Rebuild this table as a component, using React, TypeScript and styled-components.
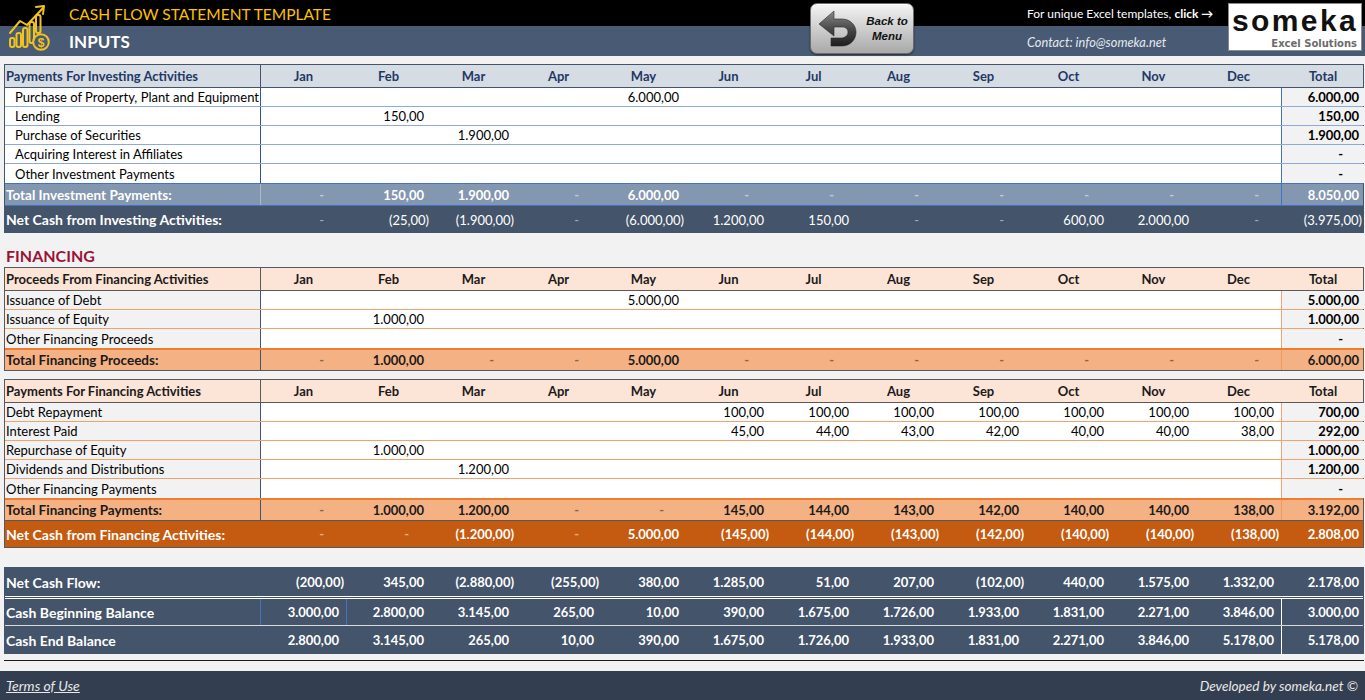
import React from 'react';
import styled, { createGlobalStyle } from 'styled-components';

const MONTHS = ['Jan', 'Feb', 'Mar', 'Apr', 'May', 'Jun', 'Jul', 'Aug', 'Sep', 'Oct', 'Nov', 'Dec'];
const COLS = '256px repeat(12, 85px) 84px';

type Tone = 'inv' | 'fin';

const TONES = {
  inv: {
    head: '#d6dce4',
    headText: '#1f3864',
    line: '#8ea9db',
    sep: '#2f5597',
    totalSep: '#4472c4',
    labelBg: '#ffffff',
    indent: 10,
    outline: '#44546a',
  },
  fin: {
    head: '#fce4d6',
    headText: '#1a1a1a',
    line: '#f1a26e',
    sep: '#44546a',
    totalSep: '#f1a26e',
    labelBg: '#f2f2f2',
    indent: 1,
    outline: '#595959',
  },
};

interface LineItem {
  label: string;
  values: Record<number, string>;
  total: string;
}

const investing: LineItem[] = [
  { label: 'Purchase of Property, Plant and Equipment', values: { 4: '6.000,00' }, total: '6.000,00' },
  { label: 'Lending', values: { 1: '150,00' }, total: '150,00' },
  { label: 'Purchase of Securities', values: { 2: '1.900,00' }, total: '1.900,00' },
  { label: 'Acquiring Interest in Affiliates', values: {}, total: '-' },
  { label: 'Other Investment Payments', values: {}, total: '-' },
];

const proceeds: LineItem[] = [
  { label: 'Issuance of Debt', values: { 4: '5.000,00' }, total: '5.000,00' },
  { label: 'Issuance of Equity', values: { 1: '1.000,00' }, total: '1.000,00' },
  { label: 'Other Financing Proceeds', values: {}, total: '-' },
];

const payments: LineItem[] = [
  {
    label: 'Debt Repayment',
    values: { 5: '100,00', 6: '100,00', 7: '100,00', 8: '100,00', 9: '100,00', 10: '100,00', 11: '100,00' },
    total: '700,00',
  },
  {
    label: 'Interest Paid',
    values: { 5: '45,00', 6: '44,00', 7: '43,00', 8: '42,00', 9: '40,00', 10: '40,00', 11: '38,00' },
    total: '292,00',
  },
  { label: 'Repurchase of Equity', values: { 1: '1.000,00' }, total: '1.000,00' },
  { label: 'Dividends and Distributions', values: { 2: '1.200,00' }, total: '1.200,00' },
  { label: 'Other Financing Payments', values: {}, total: '-' },
];

const totalInvest = ['-', '150,00', '1.900,00', '-', '6.000,00', '-', '-', '-', '-', '-', '-', '-', '8.050,00'];
const netInvest = ['-', '(25,00)', '(1.900,00)', '-', '(6.000,00)', '1.200,00', '150,00', '-', '-', '600,00', '2.000,00', '-', '(3.975,00)'];
const totalProceeds = ['-', '1.000,00', '-', '-', '5.000,00', '-', '-', '-', '-', '-', '-', '-', '6.000,00'];
const totalPayments = ['-', '1.000,00', '1.200,00', '-', '-', '145,00', '144,00', '143,00', '142,00', '140,00', '140,00', '138,00', '3.192,00'];
const netFinancing = ['-', '-', '(1.200,00)', '-', '5.000,00', '(145,00)', '(144,00)', '(143,00)', '(142,00)', '(140,00)', '(140,00)', '(138,00)', '2.808,00'];
const netCashFlow = ['(200,00)', '345,00', '(2.880,00)', '(255,00)', '380,00', '1.285,00', '51,00', '207,00', '(102,00)', '440,00', '1.575,00', '1.332,00', '2.178,00'];
const beginBalance = ['3.000,00', '2.800,00', '3.145,00', '265,00', '10,00', '390,00', '1.675,00', '1.726,00', '1.933,00', '1.831,00', '2.271,00', '3.846,00', '3.000,00'];
const endBalance = ['2.800,00', '3.145,00', '265,00', '10,00', '390,00', '1.675,00', '1.726,00', '1.933,00', '1.831,00', '2.271,00', '3.846,00', '5.178,00', '5.178,00'];

// accounting format: dashes sit inward, negatives poke out to the right
const padFor = (v: string, isTotal = false) => {
  if (v === '-') return 22;
  if (v.startsWith('(')) return isTotal ? 3 : 2;
  return isTotal ? 6 : 7;
};

const GlobalStyle = createGlobalStyle`
  html, body {
    margin: 0;
    padding: 0;
  }
  body {
    background: #f2f2f2;
    font-family: Lato, "Liberation Sans", Arial, sans-serif;
    color: #000;
  }
  * {
    box-sizing: border-box;
  }
`;

const Sheet = styled.div`
  width: 1365px;
  height: 700px;
  overflow: hidden;
  display: flex;
  flex-direction: column;
`;

/* ---------- header ---------- */

const Header = styled.header`
  height: 56px;
  flex-shrink: 0;
  display: flex;
  background: linear-gradient(to bottom, #000 0, #000 26px, #485a74 26px, #485a74 100%);
`;

const LogoMark = styled.div`
  width: 69px;
  display: flex;
  align-items: flex-start;
`;

const Titles = styled.div`
  width: 741px;
  display: flex;
  flex-direction: column;
`;

const AppTitle = styled.div`
  height: 26px;
  line-height: 28px;
  color: #ffc000;
  font-size: 15.5px;
`;

const PageTitle = styled.div`
  height: 30px;
  line-height: 32px;
  color: #fff;
  font-size: 17px;
  font-weight: 700;
`;

const BackButton = styled.button`
  margin-top: 3px;
  width: 104px;
  height: 51px;
  border: 1px solid #6d6d6d;
  border-radius: 7px;
  background: linear-gradient(to bottom, #f4f4f4 0%, #d2d2d2 45%, #a9a9a9 100%);
  box-shadow: inset 0 1px 0 #fff, 0 1px 2px rgba(0, 0, 0, 0.5);
  display: flex;
  align-items: center;
  gap: 2px;
  padding: 0 0 0 6px;
  cursor: pointer;
`;

const BackLabel = styled.span`
  flex: 1;
  text-align: center;
  font-family: "Liberation Sans", Arial, sans-serif;
  font-style: italic;
  font-weight: 700;
  font-size: 11.5px;
  line-height: 15px;
  color: #111;
`;

const Links = styled.div`
  margin-left: 113px;
  width: 201px;
  display: flex;
  flex-direction: column;
`;

const PromoLine = styled.div`
  height: 26px;
  line-height: 28px;
  color: #fff;
  font-size: 12px;

  b {
    font-weight: 700;
  }
`;

const ContactLine = styled.div`
  height: 30px;
  line-height: 32px;
  color: #e4e8ee;
  font-size: 12.8px;
  font-style: italic;
`;

const BrandBox = styled.div`
  margin-top: 3px;
  width: 134px;
  height: 48px;
  background: #fff;
  border: 1px solid #8a8a8a;
  display: flex;
  flex-direction: column;
  align-items: center;
  padding: 0 4px;
`;

const BrandName = styled.div`
  font-family: "Liberation Sans", Arial, sans-serif;
  font-size: 30px;
  font-weight: 700;
  line-height: 34px;
  letter-spacing: 2.4px;
  color: #111;
`;

const BrandSub = styled.div`
  align-self: flex-end;
  font-family: "DejaVu Sans", sans-serif;
  font-size: 10px;
  font-weight: 700;
  color: #6b6b6b;
  line-height: 12px;
`;

/* ---------- tables ---------- */

const Main = styled.main`
  flex: 1;
  padding: 8px 1px 0 4px;
  display: flex;
  flex-direction: column;
`;

const Block = styled.section<{ $outline: string; $gap?: number }>`
  margin-top: ${({ $gap }) => $gap ?? 0}px;
  border: 1px solid ${({ $outline }) => $outline};
  border-bottom: none;
`;

const SectionTitle = styled.h2`
  margin: 12px 0 0 2px;
  height: 22px;
  line-height: 22px;
  font-size: 16px;
  font-weight: 700;
  color: #9b1236;
`;

interface RowStyle {
  $h: number;
  $bg?: string;
  $color?: string;
  $bold?: boolean;
  $top?: string;
  $bottom?: string;
}

const GridRow = styled.div<RowStyle>`
  display: grid;
  grid-template-columns: ${COLS};
  height: ${({ $h }) => $h}px;
  background: ${({ $bg }) => $bg ?? '#fff'};
  color: ${({ $color }) => $color ?? '#000'};
  font-weight: ${({ $bold }) => ($bold ? 700 : 400)};
  font-size: 13px;
  border-top: ${({ $top }) => $top ?? 'none'};
  border-bottom: ${({ $bottom }) => $bottom ?? 'none'};
`;

const Label = styled.div<{ $indent?: number; $bg?: string; $sep?: string; $size?: number }>`
  display: flex;
  align-items: center;
  padding-left: ${({ $indent }) => $indent ?? 1}px;
  background: ${({ $bg }) => $bg ?? 'transparent'};
  border-right: ${({ $sep }) => ($sep ? `1px solid ${$sep}` : '1px solid transparent')};
  font-size: ${({ $size }) => $size ?? 13}px;
  white-space: nowrap;
`;

const MonthHead = styled.div`
  display: flex;
  align-items: center;
  justify-content: center;
`;

const Num = styled.div<{ $pad: number; $bg?: string; $sep?: string; $bold?: boolean }>`
  display: flex;
  align-items: center;
  justify-content: flex-end;
  padding-right: ${({ $pad }) => $pad}px;
  background: ${({ $bg }) => $bg ?? 'transparent'};
  border-left: ${({ $sep }) => ($sep ? `1px solid ${$sep}` : 'none')};
  font-weight: ${({ $bold }) => ($bold === undefined ? 'inherit' : $bold ? 700 : 400)};
  white-space: nowrap;
`;

const Dash = styled.span<{ $dim?: boolean }>`
  opacity: ${({ $dim }) => ($dim ? 0.5 : 1)};
`;

/* ---------- footer ---------- */

const Rule = styled.hr`
  margin: 6px 0 0;
  border: none;
  border-top: 1px solid #1a1a1a;
  height: 0;
`;

const Footer = styled.footer`
  margin-top: 8px;
  height: 29px;
  flex-shrink: 0;
  background: #333f50;
  display: flex;
  align-items: center;
  justify-content: space-between;
  padding: 0 7px 0 6px;
  color: #e8e8e8;
  font-style: italic;
  font-size: 13.6px;
`;

const TermsLink = styled.a`
  color: inherit;
  text-decoration: underline;
  font-size: 14px;
`;

/* ---------- pieces ---------- */

const ValueText: React.FC<{ v: string; dim?: boolean }> = ({ v, dim }) =>
  v === '-' ? <Dash $dim={dim}>-</Dash> : <>{v}</>;

const HeaderRow: React.FC<{ tone: Tone; title: string }> = ({ tone, title }) => {
  const t = TONES[tone];
  return (
    <GridRow $h={23} $bg={t.head} $color={t.headText} $bold $bottom={`1px solid ${t.outline}`}>
      <Label $indent={1} $sep={t.outline}>{title}</Label>
      {MONTHS.map((m) => (
        <MonthHead key={m}>{m}</MonthHead>
      ))}
      <MonthHead>Total</MonthHead>
    </GridRow>
  );
};

const ItemRow: React.FC<{ tone: Tone; item: LineItem; last?: boolean }> = ({ tone, item, last }) => {
  const t = TONES[tone];
  return (
    <GridRow $h={19} $bottom={last ? 'none' : `1px solid ${t.line}`}>
      <Label $indent={t.indent} $bg={t.labelBg} $sep={t.sep}>
        {item.label}
      </Label>
      {MONTHS.map((m, i) => (
        <Num key={m} $pad={padFor(item.values[i] ?? '')}>
          {item.values[i] ?? ''}
        </Num>
      ))}
      <Num $pad={padFor(item.total, true)} $bg="#f2f2f2" $sep={t.totalSep} $bold>
        <ValueText v={item.total} />
      </Num>
    </GridRow>
  );
};

interface SumRowProps {
  label: string;
  values: string[];
  h: number;
  bg: string;
  color: string;
  labelSep?: string;
  totalSep?: string;
  valuesBold?: boolean;
  top?: string;
  bottom?: string;
  colSeps?: Record<number, string>;
  labelSize?: number;
}

const SumRow: React.FC<SumRowProps> = ({
  label,
  values,
  h,
  bg,
  color,
  labelSep,
  totalSep,
  valuesBold = true,
  top,
  bottom,
  colSeps = {},
  labelSize = 13.5,
}) => (
  <GridRow $h={h} $bg={bg} $color={color} $bold $top={top} $bottom={bottom}>
    <Label $indent={1} $sep={labelSep} $size={labelSize}>
      {label}
    </Label>
    {values.map((v, i) => {
      const isTotal = i === values.length - 1;
      return (
        <Num
          key={i}
          $pad={padFor(v, isTotal)}
          $bold={valuesBold}
          $sep={isTotal ? totalSep : colSeps[i]}
        >
          <ValueText v={v} dim />
        </Num>
      );
    })}
  </GridRow>
);

const GrowthLogo = () => (
  <svg width="56" height="56" viewBox="0 0 56 56">
    <g fill="none" stroke="#f2c31b" strokeWidth="2" strokeLinecap="round" strokeLinejoin="round">
      <polyline points="10,33 20,21 27,25 43,8" />
      <polyline points="36,7 44,6 43,14" />
      <rect x="10" y="38" width="4.5" height="9" rx="2" />
      <rect x="16.5" y="33" width="4.5" height="14" rx="2" />
      <rect x="23" y="28" width="4.5" height="19" rx="2" />
      <rect x="29.5" y="22" width="4.5" height="21" rx="2" />
      <rect x="36" y="15" width="4.5" height="18" rx="2" />
      <circle cx="41" cy="42" r="7.8" fill="#485a74" />
    </g>
    <text
      x="41"
      y="46.5"
      textAnchor="middle"
      fontSize="12"
      fontWeight="700"
      fontFamily="Liberation Sans, Arial, sans-serif"
      fill="#f2c31b"
    >
      $
    </text>
  </svg>
);

const UTurnArrow = () => (
  <svg width="42" height="40" viewBox="0 0 42 40">
    <defs>
      <linearGradient id="arrowFill" x1="0" y1="0" x2="0" y2="1">
        <stop offset="0" stopColor="#8a8a8a" />
        <stop offset="0.5" stopColor="#4a4a4a" />
        <stop offset="1" stopColor="#1e1e1e" />
      </linearGradient>
    </defs>
    <path
      d="M2 15 L17 2 L17 10 L25 10 C33 10 39 16 39 23 C39 31 33 37 25 37 L14 37 L14 29 L24 29 C28 29 31 26.5 31 23 C31 20 28.5 18 25 18 L17 18 L17 27 Z"
      fill="url(#arrowFill)"
      stroke="#2a2a2a"
      strokeWidth="0.6"
    />
  </svg>
);

const App: React.FC = () => {
  const inv = TONES.inv;
  const fin = TONES.fin;

  return (
    <>
      <GlobalStyle />
      <Sheet>
        <Header>
          <LogoMark>
            <GrowthLogo />
          </LogoMark>
          <Titles>
            <AppTitle>CASH FLOW STATEMENT TEMPLATE</AppTitle>
            <PageTitle>INPUTS</PageTitle>
          </Titles>
          <BackButton type="button">
            <UTurnArrow />
            <BackLabel>
              Back to
              <br />
              Menu
            </BackLabel>
          </BackButton>
          <Links>
            <PromoLine>
              For unique Excel templates, <b>click →</b>
            </PromoLine>
            <ContactLine>Contact: info@someka.net</ContactLine>
          </Links>
          <BrandBox>
            <BrandName>someka</BrandName>
            <BrandSub>Excel Solutions</BrandSub>
          </BrandBox>
        </Header>

        <Main>
          <Block $outline={inv.outline}>
            <HeaderRow tone="inv" title="Payments For Investing Activities" />
            {investing.map((item, i) => (
              <ItemRow key={item.label} tone="inv" item={item} last={i === investing.length - 1} />
            ))}
            <SumRow
              label="Total Investment Payments:"
              values={totalInvest}
              h={23}
              bg="#8497b0"
              color="#fff"
              labelSep="#adb9ca"
              totalSep="#4472c4"
              top="1px solid #4472c4"
              bottom="1px solid #4472c4"
            />
            <SumRow
              label="Net Cash from Investing Activities:"
              values={netInvest}
              h={27}
              bg="#44546a"
              color="#fff"
              valuesBold={false}
              labelSize={14}
            />
          </Block>

          <SectionTitle>FINANCING</SectionTitle>

          <Block $outline={fin.outline}>
            <HeaderRow tone="fin" title="Proceeds From Financing Activities" />
            {proceeds.map((item, i) => (
              <ItemRow key={item.label} tone="fin" item={item} last={i === proceeds.length - 1} />
            ))}
            <SumRow
              label="Total Financing Proceeds:"
              values={totalProceeds}
              h={23}
              bg="#f4b183"
              color="#1a1a1a"
              labelSep="#44546a"
              totalSep="#ed9a62"
              top="2px solid #ed7d31"
              bottom="1px solid #595959"
            />
          </Block>

          <Block $outline={fin.outline} $gap={8}>
            <HeaderRow tone="fin" title="Payments For Financing Activities" />
            {payments.map((item, i) => (
              <ItemRow key={item.label} tone="fin" item={item} last={i === payments.length - 1} />
            ))}
            <SumRow
              label="Total Financing Payments:"
              values={totalPayments}
              h={23}
              bg="#f4b183"
              color="#1a1a1a"
              labelSep="#44546a"
              totalSep="#ed9a62"
              top="2px solid #ed7d31"
              bottom="1px solid #595959"
            />
            <SumRow
              label="Net Cash from Financing Activities:"
              values={netFinancing}
              h={27}
              bg="#c55a11"
              color="#fff"
              bottom="1px solid #595959"
              labelSize={14}
            />
          </Block>

          <Block $outline="#44546a" $gap={19}>
            <SumRow
              label="Net Cash Flow:"
              values={netCashFlow}
              h={31}
              bg="#44546a"
              color="#fff"
              bottom="3px double #ffffff"
              labelSize={14}
            />
            <SumRow
              label="Cash Beginning Balance"
              values={beginBalance}
              h={27}
              bg="#44546a"
              color="#fff"
              labelSep="#4472c4"
              totalSep="#ffffff"
              colSeps={{ 1: '#4472c4' }}
              bottom="1px solid #d9d9d9"
              labelSize={14}
            />
            <SumRow
              label="Cash End Balance"
              values={endBalance}
              h={28}
              bg="#44546a"
              color="#fff"
              totalSep="#ffffff"
              labelSize={14}
            />
          </Block>
          <Rule />
        </Main>

        <Footer>
          <TermsLink href="#terms">Terms of Use</TermsLink>
          <span>Developed by someka.net ©</span>
        </Footer>
      </Sheet>
    </>
  );
};

export default App;
